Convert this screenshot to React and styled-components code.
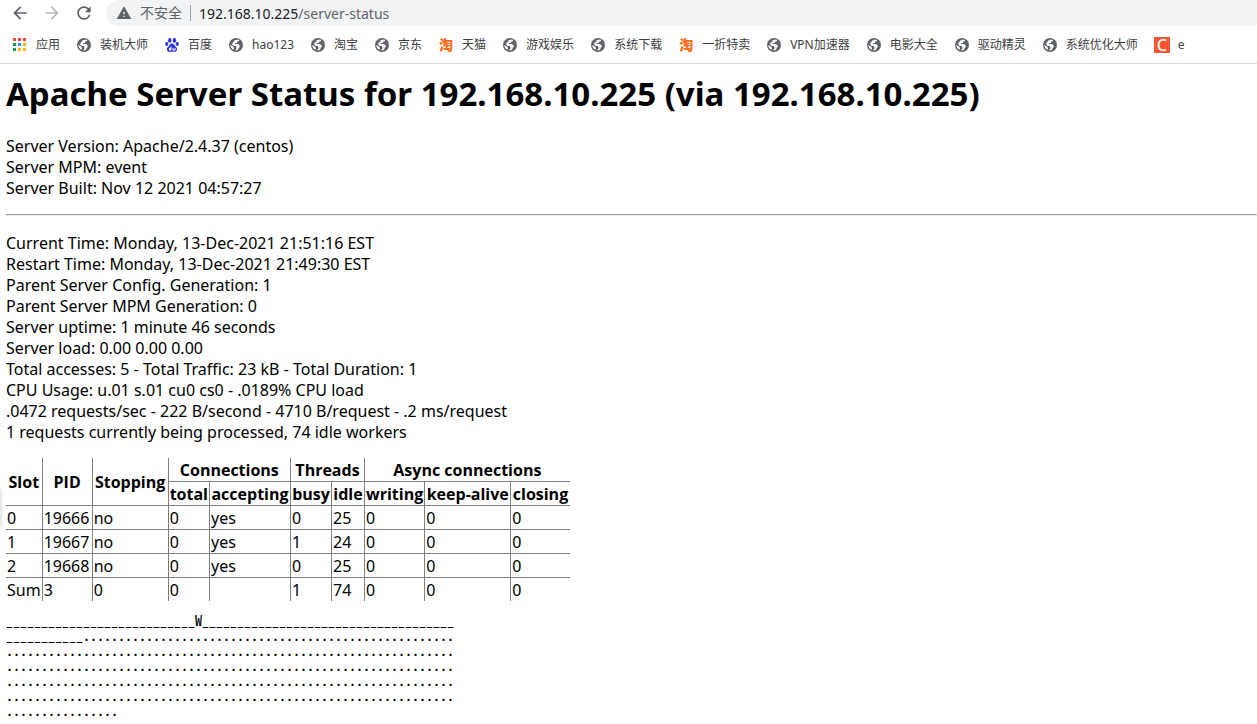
import React from 'react'
import styled, { createGlobalStyle } from 'styled-components'
import { MdArrowBack, MdArrowForward, MdRefresh, MdWarning } from 'react-icons/md'

const GlobalStyle = createGlobalStyle`
  body {
    margin: 0;
    background: #fff;
    color: #000;
    font-family: 'Noto Sans', 'Noto Sans CJK SC', sans-serif;
    font-size: 16px;
    line-height: 21px;
  }
`

const NavBar = styled.header`
  display: flex;
  align-items: center;
  gap: 12px;
  height: 26px;
  padding-left: 10px;
`

const NavButton = styled.button`
  display: flex;
  padding: 0;
  border: 0;
  background: none;
  color: ${({ disabled }) => (disabled ? '#babcbe' : '#5f6368')};
  font-size: 20px;
`

const AddressBar = styled.div`
  display: flex;
  flex: 1;
  align-items: center;
  height: 26px;
  padding-left: 10px;
  border-radius: 13px 0 0 13px;
  background: #f1f3f4;
  color: #5f6368;
  font-family: 'Noto Sans', 'Noto Sans CJK SC', sans-serif;
  font-size: 14px;
`

const Security = styled.span`
  display: flex;
  align-items: center;
  gap: 8px;
  padding-right: 8px;
  margin-right: 8px;
  border-right: 1px solid #9aa0a6;
  line-height: 16px;
`

const Host = styled.span`
  color: #202124;
`

const Bookmarks = styled.nav`
  display: flex;
  align-items: center;
  gap: 16px;
  height: 37px;
  padding-left: 12px;
  border-bottom: 1px solid #dadce0;
`

const Bookmark = styled.a`
  display: flex;
  align-items: center;
  gap: 8px;
  color: #3c4043;
  font-size: 12px;
  text-decoration: none;
  white-space: nowrap;
`

const Page = styled.main`
  padding: 9px 0 0 6px;
`

const Title = styled.h1`
  margin: 0 0 21px;
  font-size: 33px;
  line-height: 42px;
`

const Facts = styled.dl`
  margin: 0;

  dt {
    white-space: nowrap;
  }
`

const Rule = styled.hr`
  margin: 15px 0 17px;
`

const Slots = styled.table`
  margin: 15px 0 12px;
  border-collapse: collapse;

  th,
  td {
    height: 21px;
    padding: 2px 1px 0;
    border: 1px solid #808080;
  }

  th {
    font-family: 'Open Sans', sans-serif;
  }

  td {
    text-align: left;
  }

  tr:first-child > th {
    border-top: 0;
  }

  thead tr:first-child > th:first-child,
  tbody td:first-child {
    border-left: 0;
  }

  tr > :last-child {
    border-right: 0;
  }

  tbody tr:last-child > td {
    border-bottom: 0;
  }
`

/* half-width forms keep every worker on the same grid */
const Scoreboard = styled.pre`
  margin: 0;
  font-family: 'Noto Sans CJK SC', monospace;
  font-feature-settings: 'hwid';
  font-size: 14px;
  font-weight: 500;
  line-height: 15px;
`

const EdgeHandle = styled.div`
  position: fixed;
  top: 489px;
  left: -4px;
  width: 4px;
  height: 40px;
  box-shadow: 0 0 4px rgba(0, 0, 0, 0.25);
`

const AppsIcon = () => (
  <svg width="16" height="16" viewBox="0 0 16 16">
    {['#f44336', '#f44336', '#f44336', '#0f9d58', '#2196f3', '#ffb300', '#0f9d58', '#ffb300', '#ffb300'].map(
      (fill, i) => (
        <rect key={i} x={1 + (i % 3) * 5} y={1 + Math.floor(i / 3) * 5} width="3" height="3" fill={fill} />
      )
    )}
  </svg>
)

const GlobeIcon = () => (
  <svg width="16" height="16" viewBox="0 0 16 16">
    <circle cx="8" cy="8" r="7" fill="#5f6368" />
    <path
      d="M8.6 2.7h2.6l-.6 1.5-1.600.6v1.100H7.200v1h2.800l1.700 1.500v1.700l-1 .8-.6 1.500-2.200 1.300-.6-.6 1.100-1.400V10L7.500 9H5.600L4.300 7.800V6.100l1.700-1.500.6-1.300ZM2.200 8l2.800 1.400 1 1.700-.4 1.700C3.500 11.800 2.400 10.200 2.200 8Z"
      fill="#fff"
    />
  </svg>
)

const BaiduIcon = () => (
  <svg width="16" height="16" viewBox="0 0 16 16" fill="#2932e1">
    <ellipse cx="5.8" cy="3.4" rx="1.7" ry="2.3" />
    <ellipse cx="10.4" cy="3.4" rx="1.7" ry="2.3" />
    <ellipse cx="2.8" cy="7" rx="1.6" ry="2" />
    <ellipse cx="13.2" cy="7" rx="1.6" ry="2" />
    <path d="M8 6.6c-2 0-2.4 2-4 3.4-1.6 1.3-1.4 4.8 1.2 4.8h5.6c2.6 0 2.8-3.5 1.2-4.8C10.4 8.6 10 6.6 8 6.6Z" />
    <path d="M7 9.5v3.6H5.4v-1.8H7M9 11v2.1h2V11" fill="none" stroke="#fff" />
  </svg>
)

const TaoIcon = styled.span`
  width: 16px;
  color: #ff6a13;
  font-size: 14px;
  font-weight: 900;
  line-height: 16px;
  text-align: center;
`

const CIcon = styled.span`
  width: 16px;
  background: #fc5531;
  color: #fff;
  font-size: 16px;
  font-weight: 500;
  line-height: 16px;
  text-align: center;
`

const icons = {
  apps: <AppsIcon />,
  globe: <GlobeIcon />,
  baidu: <BaiduIcon />,
  tao: <TaoIcon>淘</TaoIcon>,
  c: <CIcon>C</CIcon>,
}

const bookmarks = [
  ['apps', '应用'],
  ['globe', '装机大师'],
  ['baidu', '百度'],
  ['globe', 'hao123'],
  ['globe', '淘宝'],
  ['globe', '京东'],
  ['tao', '天猫'],
  ['globe', '游戏娱乐'],
  ['globe', '系统下载'],
  ['tao', '一折特卖'],
  ['globe', 'VPN加速器'],
  ['globe', '电影大全'],
  ['globe', '驱动精灵'],
  ['globe', '系统优化大师'],
  ['c', 'e'],
]

const versionFacts = [
  'Server Version: Apache/2.4.37 (centos)',
  'Server MPM: event',
  'Server Built: Nov 12 2021 04:57:27',
]

const runtimeFacts = [
  'Current Time: Monday, 13-Dec-2021 21:51:16 EST',
  'Restart Time: Monday, 13-Dec-2021 21:49:30 EST',
  'Parent Server Config. Generation: 1',
  'Parent Server MPM Generation: 0',
  'Server uptime: 1 minute 46 seconds',
  'Server load: 0.00 0.00 0.00',
  'Total accesses: 5 - Total Traffic: 23 kB - Total Duration: 1',
  'CPU Usage: u.01 s.01 cu0 cs0 - .0189% CPU load',
  '.0472 requests/sec - 222 B/second - 4710 B/request - .2 ms/request',
  '1 requests currently being processed, 74 idle workers',
]

const columns = [36, 50, 76, 41, 81, 41, 33, 60, 86, 59]

const slots = [
  ['0', '19666', 'no', '0', 'yes', '0', '25', '0', '0', '0'],
  ['1', '19667', 'no', '0', 'yes', '1', '24', '0', '0', '0'],
  ['2', '19668', 'no', '0', 'yes', '0', '25', '0', '0', '0'],
  ['Sum', '3', '0', '0', '', '1', '74', '0', '0', '0'],
]

const scoreboard = [
  '_'.repeat(27) + 'W' + '_'.repeat(36),
  '_'.repeat(11) + '.'.repeat(53),
  '.'.repeat(64),
  '.'.repeat(64),
  '.'.repeat(64),
  '.'.repeat(64),
  '.'.repeat(16),
].join('\n')

const FactList = ({ items }) => (
  <Facts>
    {items.map(item => (
      <dt key={item}>{item}</dt>
    ))}
  </Facts>
)

export default function App() {
  return (
    <>
      <GlobalStyle />
      <NavBar>
        <NavButton aria-label="Back">
          <MdArrowBack />
        </NavButton>
        <NavButton aria-label="Forward" disabled>
          <MdArrowForward />
        </NavButton>
        <NavButton aria-label="Reload">
          <MdRefresh />
        </NavButton>
        <AddressBar>
          <Security>
            <MdWarning size={16} />
            不安全
          </Security>
          <Host>192.168.10.225</Host>/server-status
        </AddressBar>
      </NavBar>
      <Bookmarks>
        {bookmarks.map(([icon, name]) => (
          <Bookmark key={name} href="#">
            {icons[icon]}
            {name}
          </Bookmark>
        ))}
      </Bookmarks>
      <Page>
        <Title>Apache Server Status for 192.168.10.225 (via 192.168.10.225)</Title>
        <FactList items={versionFacts} />
        <Rule />
        <FactList items={runtimeFacts} />
        <Slots>
          <colgroup>
            {columns.map((width, i) => (
              <col key={i} width={width} />
            ))}
          </colgroup>
          <thead>
            <tr>
              <th rowSpan={2}>Slot</th>
              <th rowSpan={2}>PID</th>
              <th rowSpan={2}>Stopping</th>
              <th colSpan={2}>Connections</th>
              <th colSpan={2}>Threads</th>
              <th colSpan={3}>Async connections</th>
            </tr>
            <tr>
              <th>total</th>
              <th>accepting</th>
              <th>busy</th>
              <th>idle</th>
              <th>writing</th>
              <th>keep-alive</th>
              <th>closing</th>
            </tr>
          </thead>
          <tbody>
            {slots.map(row => (
              <tr key={row[0]}>
                {row.map((cell, i) => (
                  <td key={i}>{cell}</td>
                ))}
              </tr>
            ))}
          </tbody>
        </Slots>
        <Scoreboard>{scoreboard}</Scoreboard>
      </Page>
      <EdgeHandle />
    </>
  )
}
